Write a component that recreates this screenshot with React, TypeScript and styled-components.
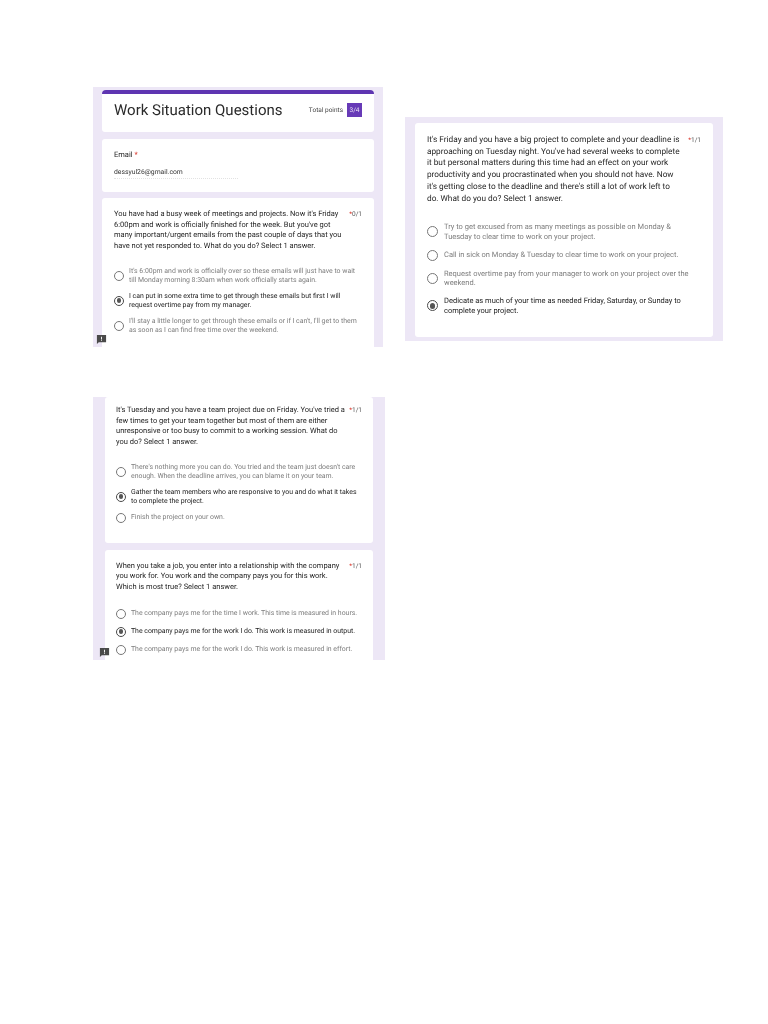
import React from 'react'
import styled, { createGlobalStyle } from 'styled-components'

const Global = createGlobalStyle`
  html, body {
    margin: 0;
    background: #ffffff;
  }
  body {
    font-family: Roboto, "Liberation Sans", sans-serif;
    color: #2b2b2b;
    text-rendering: geometricPrecision;
  }
`

const Page = styled.div`
  display: flex;
  width: 768px;
  height: 1024px;
  padding: 87px 0 0 93px;
  box-sizing: border-box;
  overflow: hidden;
  filter: blur(0.3px);
`

const LeftColumn = styled.div`
  display: flex;
  flex-direction: column;
  gap: 50px;
  width: 312px;
`

const RightColumn = styled.div`
  padding-top: 30px;
`

const Panel = styled.div<{ $w: number; $h: number; $px: number; $pt: number }>`
  position: relative;
  display: flex;
  flex-direction: column;
  gap: 6.5px;
  width: ${p => p.$w}px;
  height: ${p => p.$h}px;
  padding: ${p => p.$pt}px ${p => p.$px}px 0;
  box-sizing: border-box;
  background: #ede7f6;
  overflow: hidden;
`

const Card = styled.div<{ $h: number; $pad: number; $top?: number }>`
  flex: none;
  height: ${p => p.$h}px;
  padding: ${p => p.$top ?? 11}px ${p => p.$pad}px 0;
  box-sizing: border-box;
  background: #ffffff;
  border-radius: 3px;
`

const HeaderCard = styled(Card)`
  display: flex;
  align-items: flex-start;
  justify-content: space-between;
  padding-top: 6px;
  padding-right: 12px;
  border-top: 4px solid #5e35b1;
  border-radius: 4px 4px 3px 3px;
`

const FormTitle = styled.div`
  font-size: 15px;
  line-height: 20px;
  color: #2a2a2a;
`

const Points = styled.div`
  display: flex;
  align-items: center;
  gap: 4px;
  height: 20px;
  font-size: 6.5px;
  color: #444;
`

const Score = styled.span`
  display: flex;
  align-items: center;
  justify-content: center;
  width: 15px;
  height: 14px;
  background: #673ab7;
  color: #e8e0f5;
  font-size: 6.5px;
`

const EmailLabel = styled.div`
  font-size: 7.5px;
  line-height: 10px;
  color: #222;
`

const Required = styled.span`
  color: #d93025;
`

const EmailValue = styled.div`
  width: 124px;
  margin-top: 8px;
  padding-bottom: 1px;
  font-size: 6.8px;
  line-height: 9px;
  color: #333;
  border-bottom: 1px dotted #e2e2e2;
`

const QuestionRow = styled.div`
  display: flex;
  justify-content: space-between;
`

const QuestionText = styled.div<{ $size: number; $line: number }>`
  font-size: ${p => p.$size}px;
  line-height: ${p => p.$line}px;
  white-space: nowrap;
  color: #1f1f1f;
`

const Mark = styled.div<{ $size: number }>`
  font-size: ${p => p.$size}px;
  line-height: 11px;
  color: #555;
`

const Options = styled.div<{ $top: number; $gap: number }>`
  display: flex;
  flex-direction: column;
  gap: ${p => p.$gap}px;
  margin-top: ${p => p.$top}px;
`

const Option = styled.div<{ $gap: number }>`
  display: flex;
  align-items: center;
  gap: ${p => p.$gap}px;
`

const Radio = styled.span<{ $on: boolean; $d: number }>`
  position: relative;
  flex: none;
  width: ${p => p.$d}px;
  height: ${p => p.$d}px;
  box-sizing: border-box;
  border: 1px solid ${p => (p.$on ? '#4a4a4a' : '#777777')};
  border-radius: 50%;
  &::after {
    content: '';
    display: ${p => (p.$on ? 'block' : 'none')};
    position: absolute;
    inset: 1.6px;
    border-radius: 50%;
    background: #555;
  }
`

const OptionText = styled.div<{ $on: boolean; $size: number; $line: number }>`
  font-size: ${p => p.$size}px;
  line-height: ${p => p.$line}px;
  white-space: nowrap;
  color: ${p => (p.$on ? '#222222' : '#7d7d7d')};
`

const Feedback = styled.svg<{ $left: number }>`
  position: absolute;
  left: ${p => p.$left}px;
  bottom: 2px;
  width: 11px;
  height: 11px;
`

type Metrics = { size: number; line: number; optSize: number; optLine: number; top: number; gap: number; radio: number; radioGap: number; markSize: number }

type Answer = { lines: string[]; on?: boolean }

const Lines = ({ lines }: { lines: string[] }) => (
  <>
    {lines.map((l, i) => (
      <React.Fragment key={i}>
        {i > 0 && <br />}
        {l}
      </React.Fragment>
    ))}
  </>
)

const Question = ({ lines, mark, answers, m }: { lines: string[]; mark: string; answers: Answer[]; m: Metrics }) => (
  <>
    <QuestionRow>
      <QuestionText $size={m.size} $line={m.line}>
        <Lines lines={lines} />
      </QuestionText>
      <Mark $size={m.markSize}>
        <Required>*</Required>
        {mark}
      </Mark>
    </QuestionRow>
    <Options $top={m.top} $gap={m.gap}>
      {answers.map((a, i) => (
        <Option key={i} $gap={m.radioGap}>
          <Radio $on={!!a.on} $d={m.radio} />
          <OptionText $on={!!a.on} $size={m.optSize} $line={m.optLine}>
            <Lines lines={a.lines} />
          </OptionText>
        </Option>
      ))}
    </Options>
  </>
)

const FeedbackIcon = ({ left }: { left: number }) => (
  <Feedback $left={left} viewBox="0 0 24 24">
    <path fill="#4a4a4a" d="M2 2h20v16H6l-4 4z" />
    <path fill="#ffffff" d="M11 6h2v6h-2zM11 13.5h2v2h-2z" />
  </Feedback>
)

const small: Metrics = { size: 7.5, line: 10.7, optSize: 6.92, optLine: 9, top: 15, gap: 7, radio: 10, radioGap: 5, markSize: 6.5 }
const tight: Metrics = { ...small, top: 16, gap: 8 }
const wide: Metrics = { size: 8.24, line: 11.7, optSize: 7.5, optLine: 9.7, top: 17, gap: 8, radio: 11, radioGap: 6, markSize: 6.5 }

export default function App() {
  return (
    <Page>
      <Global />
      <LeftColumn>
        <Panel $w={290} $h={260} $px={9} $pt={3}>
          <HeaderCard $h={42} $pad={12}>
            <FormTitle>Work Situation Questions</FormTitle>
            <Points>
              Total points <Score>3/4</Score>
            </Points>
          </HeaderCard>
          <Card $h={53} $pad={12}>
            <EmailLabel>
              Email <Required>*</Required>
            </EmailLabel>
            <EmailValue>dessyul26@gmail.com</EmailValue>
          </Card>
          <Card $h={160} $pad={12}>
            <Question
              m={small}
              mark="0/1"
              lines={[
                "You have had a busy week of meetings and projects. Now it's Friday",
                "6:00pm and work is officially finished for the week. But you've got",
                'many important/urgent emails from the past couple of days that you',
                'have not yet responded to. What do you do? Select 1 answer.',
              ]}
              answers={[
                { lines: ["It's 6:00pm and work is officially over so these emails will just have to wait", 'till Monday morning 8:30am when work officially starts again.'] },
                { on: true, lines: ['I can put in some extra time to get through these emails but first I will', 'request overtime pay from my manager.'] },
                { lines: ["I'll stay a little longer to get through these emails or if I can't, I'll get to them", 'as soon as I can find free time over the weekend.'] },
              ]}
            />
          </Card>
          <FeedbackIcon left={3} />
        </Panel>
        <Panel $w={292} $h={263} $px={12} $pt={0}>
          <Card $h={146} $pad={11} $top={8}>
            <Question
              m={small}
              mark="1/1"
              lines={[
                "It's Tuesday and you have a team project due on Friday. You've tried a",
                'few times to get your team together but most of them are either',
                'unresponsive or too busy to commit to a working session. What do',
                'you do? Select 1 answer.',
              ]}
              answers={[
                { lines: ["There's nothing more you can do. You tried and the team just doesn't care", 'enough. When the deadline arrives, you can blame it on your team.'] },
                { on: true, lines: ['Gather the team members who are responsive to you and do what it takes', 'to complete the project.'] },
                { lines: ['Finish the project on your own.'] },
              ]}
            />
          </Card>
          <Card $h={120} $pad={11}>
            <Question
              m={tight}
              mark="1/1"
              lines={[
                'When you take a job, you enter into a relationship with the company',
                'you work for. You work and the company pays you for this work.',
                'Which is most true? Select 1 answer.',
              ]}
              answers={[
                { lines: ['The company pays me for the time I work. This time is measured in hours.'] },
                { on: true, lines: ['The company pays me for the work I do. This work is measured in output.'] },
                { lines: ['The company pays me for the work I do. This work is measured in effort.'] },
              ]}
            />
          </Card>
          <FeedbackIcon left={6} />
        </Panel>
      </LeftColumn>
      <RightColumn>
        <Panel $w={318} $h={224} $px={10} $pt={6}>
          <Card $h={214} $pad={12} $top={12}>
            <Question
              m={wide}
              mark="1/1"
              lines={[
                "It's Friday and you have a big project to complete and your deadline is",
                "approaching on Tuesday night. You've had several weeks to complete",
                'it but personal matters during this time had an effect on your work',
                'productivity and you procrastinated when you should not have. Now',
                "it's getting close to the deadline and there's still a lot of work left to",
                'do. What do you do? Select 1 answer.',
              ]}
              answers={[
                { lines: ['Try to get excused from as many meetings as possible on Monday &', 'Tuesday to clear time to work on your project.'] },
                { lines: ['Call in sick on Monday & Tuesday to clear time to work on your project.'] },
                { lines: ['Request overtime pay from your manager to work on your project over the', 'weekend.'] },
                { on: true, lines: ['Dedicate as much of your time as needed Friday, Saturday, or Sunday to', 'complete your project.'] },
              ]}
            />
          </Card>
        </Panel>
      </RightColumn>
    </Page>
  )
}
